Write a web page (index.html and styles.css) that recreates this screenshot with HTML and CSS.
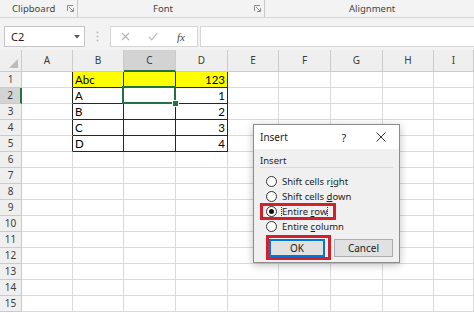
FILE: index.html
```html
<!DOCTYPE html>
<html lang="en">
<head>
  <meta charset="UTF-8">
  <title>Excel - Insert Entire Row</title>
  <link rel="stylesheet" href="styles.css">
</head>
<body>
  <!-- Ribbon group labels -->
  <div class="ribbon">
    <div class="group group-clip">
      <span class="group-label">Clipboard</span>
      <svg class="launcher" width="7" height="7" viewBox="0 0 7 7"><path d="M0.5 6V0.5H6M2 2l4.2 4.2M6.5 3.2v3.3H3.2" stroke="#8a8a8a" fill="none"/></svg>
    </div>
    <div class="group group-font">
      <span class="group-label">Font</span>
      <svg class="launcher" width="7" height="7" viewBox="0 0 7 7"><path d="M0.5 6V0.5H6M2 2l4.2 4.2M6.5 3.2v3.3H3.2" stroke="#8a8a8a" fill="none"/></svg>
    </div>
    <div class="group group-align">
      <span class="group-label">Alignment</span>
    </div>
  </div>

  <!-- Formula bar -->
  <div class="formula-bar">
    <div class="name-box">
      <span>C2</span>
      <svg width="6" height="4" viewBox="0 0 6 4"><path d="M0 0h6L3 3.5z" fill="#555"/></svg>
    </div>
    <div class="grip">
      <svg width="3" height="11" viewBox="0 0 3 11"><circle cx="1.5" cy="1.5" r="1" fill="#bdbdbd"/><circle cx="1.5" cy="5.5" r="1" fill="#bdbdbd"/><circle cx="1.5" cy="9.5" r="1" fill="#bdbdbd"/></svg>
    </div>
    <div class="fx-box">
      <span class="fx-btn"><svg width="9" height="9" viewBox="0 0 9 9"><path d="M1 1l7 7M8 1L1 8" stroke="#b5b5b5" stroke-width="1.1" fill="none"/></svg></span>
      <span class="fx-btn"><svg width="10" height="9" viewBox="0 0 10 9"><path d="M1 5l2.8 2.8L9.2 1.2" stroke="#b5b5b5" stroke-width="1.1" fill="none"/></svg></span>
      <span class="fx-btn fx">fx</span>
    </div>
    <div class="formula-input"></div>
  </div>

  <!-- Worksheet -->
  <div class="sheet" id="sheet">
    <div class="hd corner"></div>
    <div class="hd">A</div>
    <div class="hd">B</div>
    <div class="hd active">C</div>
    <div class="hd">D</div>
    <div class="hd">E</div>
    <div class="hd">F</div>
    <div class="hd">G</div>
    <div class="hd">H</div>
    <div class="hd">I</div>
  </div>

  <!-- Insert dialog -->
  <div class="dialog">
    <div class="dialog-title">
      <span class="dialog-name">Insert</span>
      <span class="help">?</span>
      <span class="close"><svg width="10" height="10" viewBox="0 0 10 10"><path d="M0.5 0.5l9 9M9.5 0.5l-9 9" stroke="#333" fill="none"/></svg></span>
    </div>
    <div class="dialog-body">
      <div class="dialog-group">Insert</div>
      <label class="option"><span class="radio"></span><span>Shift cells r<u>i</u>ght</span></label>
      <label class="option"><span class="radio"></span><span>Shift cells <u>d</u>own</span></label>
      <label class="option checked"><span class="radio"></span><span class="focus">Entire <u>r</u>ow</span></label>
      <label class="option"><span class="radio"></span><span>Entire <u>c</u>olumn</span></label>
      <div class="dialog-buttons">
        <button class="btn btn-default">OK</button>
        <button class="btn btn-cancel">Cancel</button>
      </div>
    </div>
  </div>

  <!-- red annotation boxes -->
  <div class="mark mark-row"></div>
  <div class="mark mark-ok"></div>

  <script>
    const data = {
      1: ['', 'Abc', '', '123'],
      2: ['', 'A', '', '1'],
      3: ['', 'B', '', '2'],
      4: ['', 'C', '', '3'],
      5: ['', 'D', '', '4']
    };
    const sheet = document.getElementById("sheet");

    for (let r = 1; r <= 15; r++) {
      const head = document.createElement("div");
      head.className = "hd rh" + (r === 2 ? " active" : "");
      head.textContent = r;
      sheet.appendChild(head);

      for (let c = 0; c < 9; c++) {
        const cell = document.createElement("div");
        cell.className = "cell";
        const row = data[r];
        if (row) {
          if (c === 0) cell.classList.add("edge");
          if (c >= 1 && c <= 3) cell.classList.add("box");
          if (r === 1 && c >= 1 && c <= 3) cell.classList.add("hi");
          if (c === 3) cell.classList.add("num");
          if (c < 4) cell.textContent = row[c];
        }
        if (r === 2 && c === 2) cell.classList.add("sel");
        sheet.appendChild(cell);
      }
    }
  </script>
</body>
</html>
```

FILE: styles.css
```css
body {
  margin: 0;
  width: 474px;
  height: 313px;
  overflow: hidden;
  position: relative;
  background: #fff;
  font-family: "Noto Sans", "Open Sans", sans-serif;
  color: #333;
}

/* Ribbon labels */
.ribbon {
  display: flex;
  height: 17px;
  background: #f3f3f3;
  border-bottom: 1px solid #d4d4d4;
  font-size: 9.5px;
  color: #444;
}

.group {
  display: flex;
  align-items: center;
  box-sizing: border-box;
  border-right: 1px solid #c9c9c9;
}

.group-clip {
  width: 78px;
  padding-left: 12px;
}

.group-clip .launcher {
  margin-left: auto;
  margin-right: 3px;
}

.group-font {
  width: 187px;
}

.group-font .group-label {
  flex: 1;
  text-align: center;
  padding-right: 6px;
}

.group-font .launcher {
  margin-right: 3px;
}

.group-align {
  flex: 1;
  border-right: none;
  padding-left: 84px;
}

/* Formula bar */
.formula-bar {
  display: flex;
  align-items: flex-start;
  height: 32px;
  box-sizing: border-box;
  padding-top: 8px;
  background: #f3f3f3;
}

.name-box {
  display: flex;
  align-items: center;
  justify-content: space-between;
  width: 81px;
  height: 21px;
  margin-left: 4px;
  box-sizing: border-box;
  padding: 0 4px 0 6px;
  background: #fff;
  border: 1px solid #c6c6c6;
  font-size: 11px;
  color: #222;
}

.grip {
  width: 25px;
  height: 21px;
  display: flex;
  align-items: center;
  justify-content: center;
}

.fx-box {
  display: flex;
  width: 88px;
  height: 21px;
  box-sizing: border-box;
  background: #fff;
  border: 1px solid #d6d6d6;
}

.fx-btn {
  width: 28px;
  display: flex;
  align-items: center;
  justify-content: center;
}

.fx {
  font-family: "Liberation Serif", serif;
  font-style: italic;
  font-size: 11px;
  color: #444;
}

.formula-input {
  flex: 1;
  height: 21px;
  margin-left: 2px;
  box-sizing: border-box;
  background: #fff;
  border: 1px solid #d6d6d6;
  border-right: none;
}

/* Sheet grid */
.sheet {
  display: grid;
  grid-template-columns: 22px 51px 51px 52px 52px 51px 52px 52px 51px 40px;
  grid-template-rows: 22px;
  grid-auto-rows: 16px;
}

.hd {
  box-sizing: border-box;
  background: #efefef;
  border-right: 1px solid #cbcbcb;
  border-bottom: 1px solid #cbcbcb;
  font-size: 10px;
  color: #3c3c3c;
  text-align: center;
  line-height: 21px;
}

.hd.active {
  background: #d3d3d3;
  border-bottom: 2px solid #217346;
  line-height: 20px;
}

.rh {
  line-height: 15px;
}

.rh.active {
  border-bottom: 1px solid #cbcbcb;
  border-right: 2px solid #217346;
  line-height: 15px;
}

.corner {
  position: relative;
}

.corner::after {
  content: "";
  position: absolute;
  right: 3px;
  bottom: 3px;
  border-style: solid;
  border-width: 0 0 9px 9px;
  border-color: transparent transparent #bcbcbc transparent;
}

.cell {
  box-sizing: border-box;
  border-right: 1px solid #dadada;
  border-bottom: 1px solid #dadada;
  padding: 0 2px;
  font-family: Lato, "Liberation Sans", sans-serif;
  font-size: 11.5px;
  line-height: 15px;
  color: #000;
  white-space: nowrap;
  overflow: hidden;
}

.num {
  text-align: right;
}

.hi {
  background: #ffff00;
}

.box {
  border-right-color: #262626;
  border-bottom-color: #262626;
}

.edge {
  border-right-color: #262626;
}

.sel {
  position: relative;
  overflow: visible;
}

.sel::before {
  content: "";
  position: absolute;
  left: -2px;
  top: -2px;
  right: -1px;
  bottom: -1px;
  border: 2px solid #217346;
}

.sel::after {
  content: "";
  position: absolute;
  right: -4px;
  bottom: -4px;
  width: 5px;
  height: 5px;
  background: #217346;
  border: 1px solid #fff;
}

/* Insert dialog */
.dialog {
  position: absolute;
  left: 253px;
  top: 124px;
  width: 147px;
  height: 139px;
  box-sizing: border-box;
  border: 1px solid #8c8c8c;
  background: #f0f0f0;
  box-shadow: 0 2px 8px rgba(0,0,0,0.25);
  font-size: 9.5px;
  color: #1e1e1e;
}

.dialog-title {
  display: flex;
  align-items: center;
  height: 24px;
  padding-left: 6px;
  background: #fff;
  font-size: 10px;
}

.dialog-name {
  flex: 1;
}

.help {
  width: 20px;
  margin-right: 12px;
  text-align: center;
  font-size: 11px;
}

.close {
  width: 30px;
  margin-right: 3px;
  display: flex;
  justify-content: center;
}

.dialog-body {
  padding: 6px 6px 0 6px;
}

.dialog-group {
  line-height: 12px;
  border-bottom: 1px solid #dcdcdc;
  margin-bottom: 6px;
}

.option {
  display: flex;
  align-items: center;
  gap: 5px;
  height: 15px;
  padding-left: 6px;
  white-space: nowrap;
}

.radio {
  flex: none;
  display: flex;
  align-items: center;
  justify-content: center;
  width: 11px;
  height: 11px;
  box-sizing: border-box;
  border: 1px solid #333;
  border-radius: 50%;
  background: #fff;
}

.checked .radio::after {
  content: "";
  width: 5px;
  height: 5px;
  border-radius: 50%;
  background: #111;
}

.focus {
  outline: 1px dotted #333;
  line-height: 11px;
}

.dialog-buttons {
  display: flex;
  gap: 9px;
  margin-top: 5px;
  padding-left: 9px;
}

.btn {
  height: 18px;
  box-sizing: border-box;
  padding: 0;
  border: 1px solid #adadad;
  background: #e1e1e1;
  font-family: inherit;
  font-size: 10px;
  color: #222;
}

.btn-default {
  width: 56px;
  border: 2px solid #0078d7;
}

.btn-cancel {
  width: 59px;
}

/* annotation marks */
.mark {
  position: absolute;
  box-sizing: border-box;
  border: 3px solid #d2202e;
}

.mark-row {
  left: 260px;
  top: 203px;
  width: 76px;
  height: 17px;
}

.mark-ok {
  left: 266px;
  top: 235px;
  width: 65px;
  height: 25px;
}
```
